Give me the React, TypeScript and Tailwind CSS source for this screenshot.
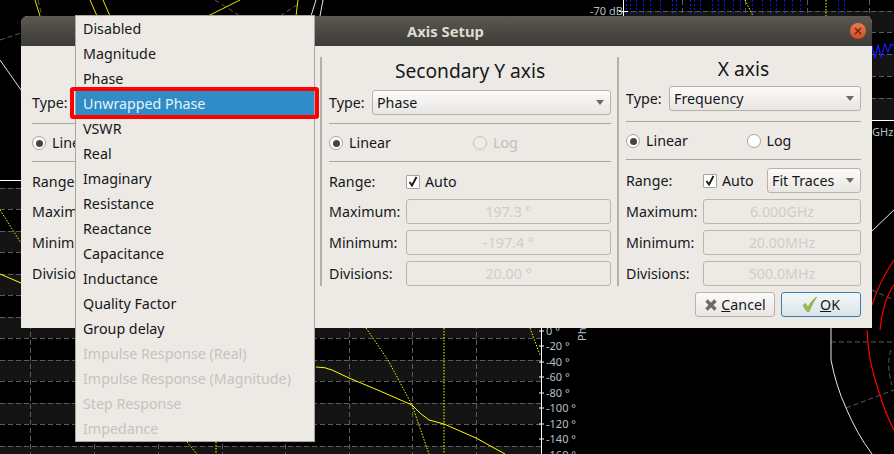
import React from "react";

const items = ["Disabled","Magnitude","Phase","Unwrapped Phase","VSWR","Real","Imaginary","Resistance","Reactance","Capacitance","Inductance","Quality Factor","Group delay","Impulse Response (Real)","Impulse Response (Magnitude)","Step Response","Impedance"];

function Background() {
  const vx = [30,94,158,222,285,349,412,476];
  const hy = [188,209,231,252,274,295,317,338,360,381,403,424,446];
  const labels: [string, number][] = [["0 °",331],["-20 °",346],["-40 °",362],["-60 °",377],["-80 °",393],["-100 °",408],["-120 °",424],["-140 °",439],["-160 °",455]];
  const blue = [626,630,636,643,650,660,672,676,690,694,700,712,718,724,733,740,752,762,770,776,784,792,800,838,844];
  return (
    <svg className="absolute inset-0" width="894" height="454" viewBox="0 0 894 454" fill="none">
      {hy.map((y,i)=> i%2===0 && i<hy.length-1 ? <rect key={y} x="0" y={y} width="541" height={hy[i+1]-y} fill="#141414"/> : null)}
      <rect x="0" y="446" width="541" height="8" fill="#141414"/>
      <rect x="623" y="11" width="271" height="21" fill="#141414"/>
      <rect x="623" y="54" width="271" height="22" fill="#141414"/>
      <rect x="623" y="98" width="271" height="22" fill="#141414"/>
      <g stroke="#5c5c5c" strokeDasharray="5 3">
        {hy.map(y=><line key={y} x1="0" x2="541" y1={y+0.5} y2={y+0.5}/>)}
        {vx.map(x=><line key={x} x1={x+0.5} x2={x+0.5} y1="188" y2="454"/>)}
        {[11,32,54,76,98].map(y=><line key={y} x1="623" x2="894" y1={y+0.5} y2={y+0.5}/>)}
        {[682,745,807,869].map(x=><line key={x} x1={x+0.5} x2={x+0.5} y1="0" y2="120"/>)}
        <path d="M0 40L21 33M831 342H894M846 408L894 390M891 350Q886 365 892 385M872 290L894 300"/>
        <path d="M38 0L42 16M215 0L240 16M280 16L300 3"/>
      </g>
      {blue.map(x=><line key={x} x1={x+0.5} x2={x+0.5} y1="0" y2="16" stroke="#1414e6" strokeDasharray="2 2"/>)}
      <path d="M872 46L875 58L878 45L881 57L885 44L888 52L891 44L894 46" stroke="#1a1aff" strokeWidth="1.2"/>
      <path d="M35 0L40 16M90 0L97 16M103 0L110 16M240 0L208 16M296 16L298 0" stroke="#e6e600" strokeWidth="1"/>
      <path d="M745 0L753 16M826 0V16" stroke="#ffff00" strokeDasharray="1.5 1.5"/>
      <path d="M0 274L21 283M316 367Q326 367 332 370L349 378L380 391L412 405Q420 414 429 420L444 424L476 438L505 454" stroke="#ffff00" strokeWidth="1"/>
      <path d="M0 210L21 243M187 442L197 454M216 442V454M366 328L388 360L412 405L429 454M444 328V454M530 328L540 355" stroke="#ffff00" strokeDasharray="1.5 1.5"/>
      <path d="M0 60L21 90M872 231L894 210M831 328V360Q836 386 846 408Q857 434 872 454M311 16L316 0M320 16L323 0" stroke="#e8e8e8" strokeWidth="1"/>
      <path d="M872 305Q880 280 894 260M880 330Q883 300 894 285M867 330Q868 362 880 395Q886 415 894 430" stroke="#ff0000" strokeWidth="1.2"/>
      <path d="M0 180.5H21M541.5 328V454M623.5 0V16M872 120.5H894M619 11.5H628" stroke="#ffffff"/>
      {labels.map(([t,y])=><line key={t} x1="539" x2="544" y1={y} y2={y} stroke="#fff"/>)}
      <g fill="#b4c0c8" fontFamily="Noto Sans, sans-serif" fontSize="11">
        <text x="590" y="15">-70 dB</text>
        <text x="872" y="136">GHz</text>
        {labels.map(([t,y])=><text key={t} x="546" y={y+4}>{t}</text>)}
        <text transform="translate(586 341) rotate(-90)">Ph</text>
      </g>
    </svg>
  );
}

function Arrow() {
  return <span className="ml-auto w-0 h-0 border-x-[4px] border-x-transparent border-t-[5px] border-t-[#6e6b66]" />;
}

function Combo({ text, className }: { text: string; className: string }) {
  return (
    <div className={`flex items-center h-[25px] pl-[4px] pr-[6px] rounded-[3px] border border-[#b6b2aa] bg-gradient-to-b from-[#fbfbfa] to-[#e9e6e2] ${className}`}>
      <span>{text}</span>
      <Arrow />
    </div>
  );
}

function Radio({ on, disabled, label }: { on?: boolean; disabled?: boolean; label: string }) {
  return (
    <div className="flex items-center gap-[6px]">
      <span className={`flex items-center justify-center w-[14px] h-[14px] rounded-full border ${disabled ? "border-[#c4c1bb] bg-[#efebe7]" : "border-[#a5a39e] bg-white"}`}>
        {on && <span className="w-[7px] h-[7px] rounded-full bg-[#444444]" />}
      </span>
      <span className={disabled ? "text-[#c2bfba]" : ""}>{label}</span>
    </div>
  );
}

function Check() {
  return (
    <span className="flex items-center justify-center w-[14px] h-[14px] border border-[#a5a39e] bg-white rounded-[1px]">
      <svg width="10" height="11" viewBox="0 0 10 11" fill="none"><path d="M1.5 6L4 9.5L8.5 1" stroke="#1a1a1a" strokeWidth="1.9"/></svg>
    </span>
  );
}

function Field({ label, value, className }: { label: string; value: string; className: string }) {
  return (
    <div className={`flex items-center h-[25px] ${className}`}>
      <span className="flex-1">{label}</span>
      <div className="flex items-center justify-center h-[25px] w-[var(--fw)] rounded-[3px] border border-[#bab6ae] text-[#d0cdc8]">{value}</div>
    </div>
  );
}

function Hr({ className }: { className: string }) {
  return <div className={`h-px bg-[#aaa7a1] ${className}`} />;
}

function Fields({ values }: { values: string[] }) {
  return (
    <>
      <Field label="Maximum:" value={values[0]} className="" />
      <Field label="Minimum:" value={values[1]} className="mt-[6px]" />
      <Field label="Divisions:" value={values[2]} className="mt-[6px]" />
    </>
  );
}

function TallColumn({ title, combo, log, values, className }: { title: string; combo: string; log: boolean; values: string[]; className: string }) {
  return (
    <div className={`flex flex-col [--fw:205px] ${className}`}>
      <div className="flex items-center justify-center h-[33px] pb-[6px] text-[19.2px] leading-none">{title}</div>
      <div className="flex items-center gap-[6px] h-[25px]">
        <span className="w-[37px]">Type:</span>
        <Combo text={combo} className="flex-1" />
      </div>
      <Hr className="mt-[8px]" />
      <div className="grid grid-cols-2 gap-x-[6px] items-center h-[24px] mt-[7px]">
        <Radio on label="Linear" />
        <Radio disabled={!log} label="Log" />
      </div>
      <Hr className="mt-[6px]" />
      <div className="flex items-center h-[25px] mt-[7px] mb-[1px]">
        <span className="w-[77px]">Range:</span>
        <Check />
        <span className="ml-[5px]">Auto</span>
      </div>
      <div className="mt-[4px]"><Fields values={values} /></div>
    </div>
  );
}

export default function App() {
  return (
    <div className="relative w-[894px] h-[454px] overflow-hidden bg-black text-[14.25px] leading-[16px] text-[#15171a] font-['Noto_Sans',sans-serif]">
      <Background />
      {/* dialog window */}
      <div className="absolute left-[21px] top-[16px] w-[851px] h-[312px] bg-[#edeae5] rounded-t-[7px]">
        <div className="relative flex items-center justify-center h-[30px] rounded-t-[7px] bg-gradient-to-b from-[#5b5850] to-[#3c3b37] text-[#dfdbd2] font-bold text-[14.8px]">
          <span className="-ml-[2px]">Axis Setup</span>
          <span className="absolute right-[6px] top-[7px] flex items-center justify-center w-[16px] h-[16px] rounded-full bg-gradient-to-b from-[#ec7a52] to-[#cf4a1c]">
            <svg width="8" height="8" viewBox="0 0 8 8"><path d="M1 1L7 7M7 1L1 7" stroke="#5a2410" strokeWidth="1.2"/></svg>
          </span>
        </div>
        <div className="flex pl-[11px] pt-[11px]">
          <TallColumn title="" combo="" log={true} values={["","",""]} className="w-[282px]" />
          <div className="w-[2px] h-[229px] ml-[6px] mr-[7px] bg-[#b3b0aa]" />
          <TallColumn title="Secondary Y axis" combo="Phase" log={false} values={["197.3 °","-197.4 °","20.00 °"]} className="w-[282px]" />
          <div className="w-[2px] h-[229px] ml-[6px] mr-[7px] bg-[#b3b0aa]" />
          <div className="flex flex-col w-[235px] [--fw:158px]">
            <div className="flex items-center justify-center h-[29px] pb-[5px] text-[19.2px] leading-none">X axis</div>
            <div className="flex items-center gap-[6px] h-[25px]">
              <span className="w-[37px]">Type:</span>
              <Combo text="Frequency" className="flex-1" />
            </div>
            <Hr className="mt-[10px]" />
            <div className="grid grid-cols-2 gap-x-[6px] items-center h-[24px] mt-[7px]">
              <Radio on label="Linear" />
              <Radio label="Log" />
            </div>
            <Hr className="mt-[6px]" />
            <div className="flex items-center h-[25px] mt-[8px]">
              <span className="w-[77px]">Range:</span>
              <Check />
              <span className="ml-[5px]">Auto</span>
              <Combo text="Fit Traces" className="ml-auto w-[94px]" />
            </div>
            <div className="mt-[6px]"><Fields values={["6.000GHz","20.00MHz","500.0MHz"]} /></div>
          </div>
        </div>
        <div className="flex justify-end gap-[6px] pr-[11px] mt-[6px]">
          <button className="flex items-center justify-center gap-[3px] w-[80px] h-[25px] rounded-[3px] border border-[#b6b2aa] bg-gradient-to-b from-[#fbfbfa] to-[#e9e6e2]">
            <svg width="14" height="14" viewBox="0 0 14 14"><path d="M2.5 2.5L11.5 11.5M11.5 2.5L2.5 11.5" stroke="#6b6b68" strokeWidth="3.4"/></svg>
            <span><span className="underline">C</span>ancel</span>
          </button>
          <button className="flex items-center justify-center gap-[2px] w-[80px] h-[25px] rounded-[3px] border border-[#3a7cab] bg-gradient-to-b from-[#f4f7f8] to-[#d9e4ea]">
            <svg width="16" height="17" viewBox="0 0 16 17"><path d="M1 9.5L3.5 7.5L6 11.5Q9 5 14.5 1Q10.5 7 7 15.5H5Z" fill="#9cc14a" stroke="#7a9c36" strokeWidth="0.7"/></svg>
            <span><span className="underline">O</span>K</span>
          </button>
        </div>
      </div>
      {/* dropdown */}
      <div className="absolute left-[75px] top-[15px] w-[240px] h-[427px] bg-[#edeae5] border border-[#a8a69f]">
        {items.map((t, i) => (
          <div key={t} className={`flex items-center h-[25px] pl-[7px] ${i === 3 ? "bg-[#308cc6] text-[#e8f2f8]" : i > 12 ? "text-[#c6c3be]" : ""}`}>{t}</div>
        ))}
      </div>
      <div className="absolute left-[70px] top-[87px] w-[249px] h-[32px] rounded-[3px] border-[4px] border-[#ff0000]" />
    </div>
  );
}
